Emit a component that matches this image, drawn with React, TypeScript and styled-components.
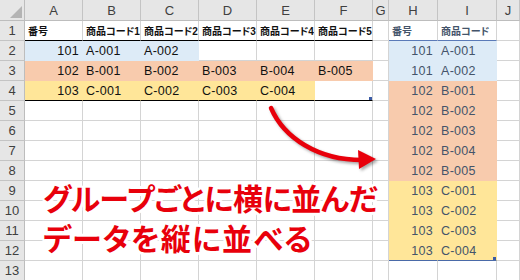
import React from "react";
import styled, { createGlobalStyle } from "styled-components";

type Fill = "blue" | "salmon" | "yellow" | undefined;

const fills: Record<string, string> = {
  blue: "#ddebf7",
  salmon: "#f8cbad",
  yellow: "#ffe699",
};

const GlobalStyle = createGlobalStyle`
  html, body {
    margin: 0;
    padding: 0;
    background: #ffffff;
    overflow: hidden;
  }
`;

const COLS = ["A", "B", "C", "D", "E", "F", "G", "H", "I", "J"];

// left table: rows 2-4, columns A-F
const leftRows: { fill: Fill; cells: string[]; span: number }[] = [
  { fill: "blue", cells: ["101", "A-001", "A-002"], span: 3 },
  { fill: "salmon", cells: ["102", "B-001", "B-002", "B-003", "B-004", "B-005"], span: 6 },
  { fill: "yellow", cells: ["103", "C-001", "C-002", "C-003", "C-004"], span: 5 },
];

// right table: rows 2-12, columns H-I
const rightRows: { fill: Fill; no: string; code: string }[] = [
  { fill: "blue", no: "101", code: "A-001" },
  { fill: "blue", no: "101", code: "A-002" },
  { fill: "salmon", no: "102", code: "B-001" },
  { fill: "salmon", no: "102", code: "B-002" },
  { fill: "salmon", no: "102", code: "B-003" },
  { fill: "salmon", no: "102", code: "B-004" },
  { fill: "salmon", no: "102", code: "B-005" },
  { fill: "yellow", no: "103", code: "C-001" },
  { fill: "yellow", no: "103", code: "C-002" },
  { fill: "yellow", no: "103", code: "C-003" },
  { fill: "yellow", no: "103", code: "C-004" },
];

export default function App() {
  const rows = [];
  for (let r = 1; r <= 13; r++) {
    const cells = [];
    cells.push(<RowHead key="rh">{r}</RowHead>);
    for (let c = 0; c < COLS.length; c++) {
      const col = COLS[c];
      let text = "";
      let fill: Fill;
      let align: "left" | "right" = "left";
      let head = false;
      let rule: string | undefined;
      let tone: "black" | "slate" = "black";
      let handle = false;

      if (c <= 5) {
        if (r === 1) {
          text = c === 0 ? "番号" : `商品コード${c}`;
          head = true;
          rule = "#000000";
        } else if (r <= 4) {
          const row = leftRows[r - 2];
          if (c < row.span) fill = row.fill;
          text = row.cells[c] ?? "";
          if (c === 0) align = "right";
          if (r === 4) rule = "#000000";
          if (r === 4 && c === 5) handle = true;
        }
      } else if (col === "H" || col === "I") {
        tone = "slate";
        if (r === 1) {
          text = col === "H" ? "番号" : "商品コード";
          head = true;
          rule = "#5a7ab8";
        } else if (r <= 12) {
          const row = rightRows[r - 2];
          fill = row.fill;
          text = col === "H" ? row.no : row.code;
          if (col === "H") align = "right";
          if (r === 12) rule = "#4a6aa8";
          if (r === 12 && col === "I") handle = true;
        }
      }

      cells.push(
        <Cell
          key={col}
          $fill={fill}
          $align={align}
          $head={head}
          $rule={rule}
          $tone={tone}
          $wide={col === "H" || col === "I"}
        >
          {text}
          {handle && <Handle />}
        </Cell>
      );
    }
    rows.push(<React.Fragment key={r}>{cells}</React.Fragment>);
  }

  return (
    <>
      <GlobalStyle />
      <Sheet>
        <Grid>
          <Corner>
            <CornerMark />
          </Corner>
          {COLS.map((c) => (
            <ColHead key={c}>{c}</ColHead>
          ))}
          {rows}
        </Grid>

        <Arrow viewBox="0 0 520 280">
          <path
            d="M271 108 C 284 138, 318 160, 362 160"
            fill="none"
            stroke="#e8000b"
            strokeWidth="4.5"
            strokeLinecap="round"
          />
          <polygon points="376,159 358,150 359,169" fill="#e8000b" />
        </Arrow>

        <Caption>
          <CaptionLine $track={-0.4}>グループごとに横に並んだ</CaptionLine>
          <CaptionLine $track={1.1}>データを縦に並べる</CaptionLine>
        </Caption>
      </Sheet>
    </>
  );
}

const Sheet = styled.div`
  position: relative;
  width: 520px;
  height: 280px;
  overflow: hidden;
  background: #ffffff;
`;

const Grid = styled.div`
  display: grid;
  grid-template-columns: 25px repeat(6, 58px) 16px 49px 59px 1fr;
  grid-template-rows: 21px repeat(13, 20px);
  font-family: "Liberation Sans", "Noto Sans CJK JP", sans-serif;
`;

const Corner = styled.div`
  position: relative;
  background: #e6e6e6;
  border-right: 1px solid #bdbdbd;
  border-bottom: 1px solid #bdbdbd;
`;

const CornerMark = styled.div`
  position: absolute;
  right: 2px;
  bottom: 2px;
  width: 0;
  height: 0;
  border-left: 12px solid transparent;
  border-bottom: 12px solid #b4b4b4;
`;

const ColHead = styled.div`
  display: flex;
  align-items: center;
  justify-content: center;
  background: #e6e6e6;
  border-right: 1px solid #c4c4c4;
  border-bottom: 1px solid #bdbdbd;
  color: #404040;
  font-size: 13px;
`;

const RowHead = styled.div`
  display: flex;
  align-items: center;
  justify-content: center;
  background: #e6e6e6;
  border-right: 1px solid #bdbdbd;
  border-bottom: 1px solid #c4c4c4;
  color: #404040;
  font-size: 13px;
`;

const Cell = styled.div<{
  $fill: Fill;
  $align: "left" | "right";
  $head: boolean;
  $rule?: string;
  $tone: "black" | "slate";
  $wide: boolean;
}>`
  position: relative;
  display: flex;
  align-items: center;
  justify-content: ${(p) => (p.$align === "right" ? "flex-end" : "flex-start")};
  padding: 0 ${(p) => (p.$wide ? 4 : 3)}px 0 3px;
  white-space: nowrap;
  overflow: hidden;
  background: ${(p) => (p.$fill ? fills[p.$fill] : "transparent")};
  border-right: 1px solid ${(p) => (p.$fill ? fills[p.$fill] : "#d4d4d4")};
  border-bottom: 1px solid
    ${(p) => p.$rule ?? (p.$fill ? fills[p.$fill] : "#d4d4d4")};
  color: ${(p) => (p.$tone === "slate" ? "#44546a" : "#111111")};
  font-size: ${(p) => (p.$head ? "10px" : "12.5px")};
  font-weight: ${(p) => (p.$head ? 700 : 400)};
  font-feature-settings: ${(p) => (p.$head ? '"palt"' : "normal")};
  letter-spacing: ${(p) => (p.$head ? "0" : "0.3px")};
`;

const Handle = styled.span`
  position: absolute;
  right: -1px;
  bottom: -1px;
  width: 4px;
  height: 4px;
  background: #3b5ba5;
`;

const Arrow = styled.svg`
  position: absolute;
  inset: 0;
  width: 520px;
  height: 280px;
  pointer-events: none;
  filter: drop-shadow(2px 2px 1.5px rgba(0, 0, 0, 0.35));
`;

const Caption = styled.div`
  position: absolute;
  left: 43px;
  top: 178px;
  display: flex;
  flex-direction: column;
  gap: 1px;
  pointer-events: none;
`;

const CaptionLine = styled.div<{ $track: number }>`
  font-family: "Noto Sans CJK JP", sans-serif;
  font-weight: 700;
  font-size: 30px;
  line-height: 39px;
  color: #e8000b;
  letter-spacing: ${(p) => p.$track}px;
  font-feature-settings: "palt";
  white-space: nowrap;
  text-shadow: -3px 0 #fff, 3px 0 #fff, 0 -3px #fff, 0 3px #fff,
    -2px -2px #fff, 2px 2px #fff, -2px 2px #fff, 2px -2px #fff;
`;
